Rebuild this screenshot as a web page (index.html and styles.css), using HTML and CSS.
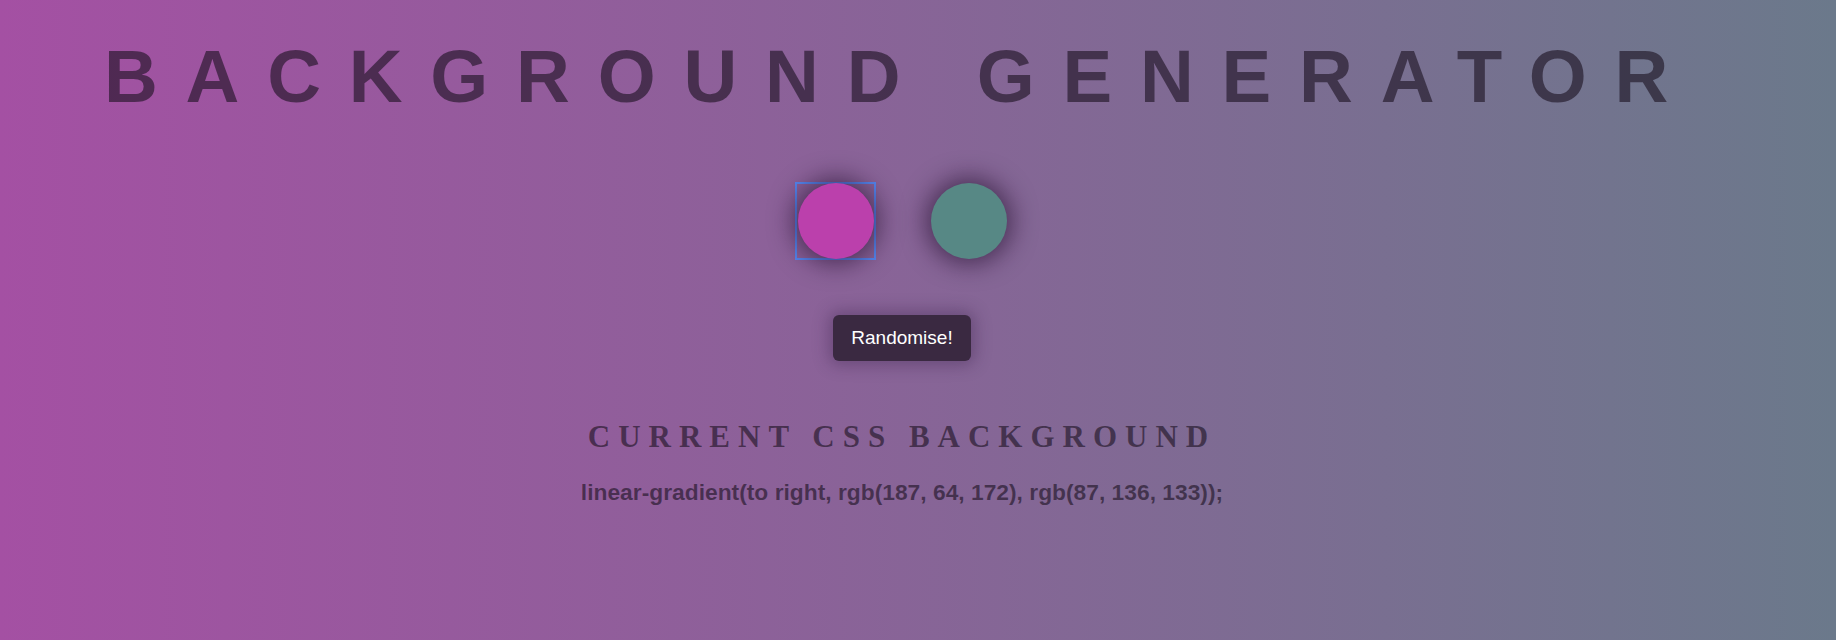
FILE: index.html
```html
<!DOCTYPE html>
<html lang="en">
<head>
  <meta charset="UTF-8">
  <meta name="viewport" content="width=device-width, initial-scale=1.0">
  <title>Background Generator</title>
  <link rel="stylesheet" href="styles.css">
</head>
<body>
  <h1 class="title">BACKGROUND GENERATOR</h1>

  <div class="pickers">
    <div class="picker focused"><div class="swatch" id="color1"></div></div>
    <div class="picker"><div class="swatch" id="color2"></div></div>
  </div>

  <div class="actions">
    <button class="random-btn" onclick="randomise()">Randomise!</button>
  </div>

  <h3 class="subtitle">Current CSS Background</h3>
  <p class="css-output" id="cssOutput">linear-gradient(to right, rgb(187, 64, 172), rgb(87, 136, 133));</p>

  <script>
    function randomColor() {
      const r = Math.floor(Math.random() * 256);
      const g = Math.floor(Math.random() * 256);
      const b = Math.floor(Math.random() * 256);
      return "rgb(" + r + ", " + g + ", " + b + ")";
    }

    function randomise() {
      const c1 = randomColor();
      const c2 = randomColor();
      document.getElementById("color1").style.background = c1;
      document.getElementById("color2").style.background = c2;
      document.getElementById("cssOutput").textContent =
        "linear-gradient(to right, " + c1 + ", " + c2 + ");";
    }
  </script>
</body>
</html>
```

FILE: styles.css
```css
body {
  margin: 0;
  padding: 0 32px 0 0;
  min-height: 100vh;
  background: linear-gradient(to right, #a450a3, #6b798b);
  font-family: 'Liberation Sans', Arial, sans-serif;
  color: rgba(25, 15, 30, 0.6);
  text-align: center;
}

.title {
  margin: 35px 0 0;
  padding-right: 4px;
  font-size: 74.5px;
  line-height: 84px;
  font-weight: bold;
  letter-spacing: 27.8px;
}

.pickers {
  display: flex;
  justify-content: center;
  gap: 52px;
  margin-top: 63px;
}

.picker {
  padding: 0 0.5px;
  border: 2px solid transparent;
}

.picker.focused {
  border-color: #5487f0;
}

.swatch {
  width: 76px;
  height: 76px;
  margin: -1px 0;
  border-radius: 50%;
  box-shadow: 0 0 24px 5px rgba(30, 10, 40, 0.6);
}

#color1 {
  background: rgb(187, 64, 172);
}

#color2 {
  background: rgb(87, 136, 133);
}

.actions {
  margin-top: 55px;
}

.random-btn {
  height: 46px;
  padding: 0 18px;
  border: none;
  border-radius: 6px;
  background: #3a2941;
  color: white;
  font-family: 'Liberation Sans', Arial, sans-serif;
  font-size: 19px;
  box-shadow: 0 0 16px 4px rgba(50, 25, 65, 0.35);
  cursor: pointer;
}

.subtitle {
  margin: 58px 0 0;
  font-family: 'Liberation Serif', 'Times New Roman', serif;
  font-size: 31px;
  font-weight: bold;
  text-transform: uppercase;
  letter-spacing: 8px;
}

.css-output {
  margin: 24px 0 0;
  font-size: 22.8px;
  font-weight: bold;
}
```
